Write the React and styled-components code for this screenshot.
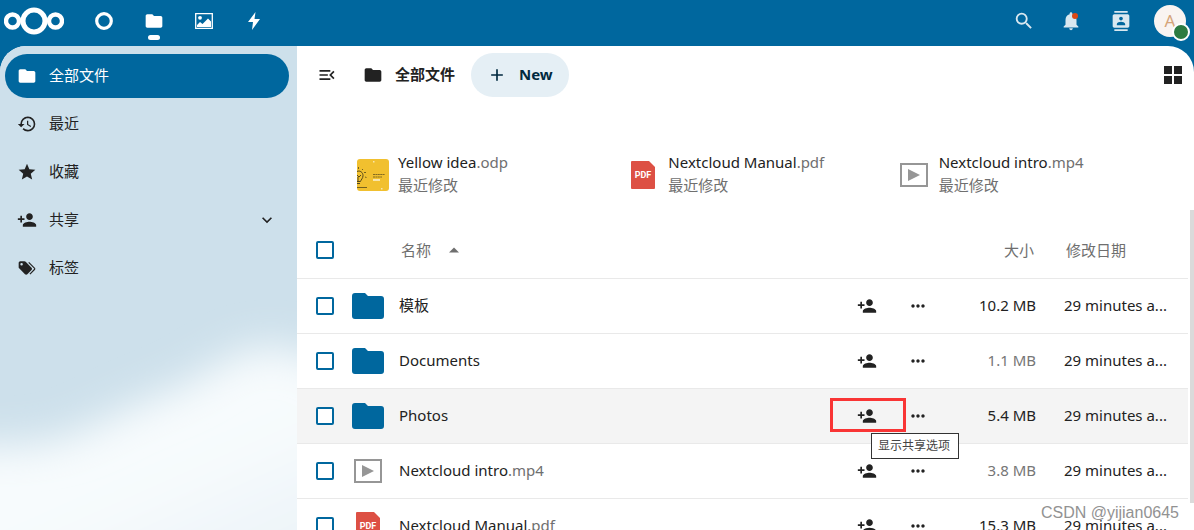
import React from "react";
import styled, { createGlobalStyle, css } from "styled-components";
import {
  MdAdd,
  MdContacts,
  MdExpandMore,
  MdFolder,
  MdHistory,
  MdMenuOpen,
  MdMoreHoriz,
  MdNotifications,
  MdPersonAdd,
  MdSearch,
  MdStar,
} from "react-icons/md";

const GlobalStyle = createGlobalStyle`
  * {
    box-sizing: border-box;
  }
  body {
    margin: 0;
    background: #00679e;
    color: #222;
    font-family: "Noto Sans", "Noto Sans CJK SC", sans-serif;
    font-size: 15px;
    line-height: 22px;
  }
  button, input {
    font: inherit;
    color: inherit;
  }
  svg {
    display: block;
    flex-shrink: 0;
  }
`;

const Page = styled.div`
  display: flex;
  flex-direction: column;
  height: 100vh;
  overflow: hidden;
`;

const Header = styled.header`
  display: flex;
  flex-shrink: 0;
  align-items: center;
  justify-content: space-between;
  height: 46px;
  padding: 0 0 4px 4px;
`;

const HeaderGroup = styled.nav`
  display: flex;
  align-items: center;
`;

const LogoLink = styled.a`
  margin-right: 15px;
`;

const AppLink = styled.a`
  position: relative;
  display: flex;
  align-items: center;
  justify-content: center;
  width: 50px;
  height: 42px;
  color: #fff;
  ${(props) =>
    props.$active &&
    css`
      &::after {
        content: "";
        position: absolute;
        bottom: 2px;
        width: 12px;
        height: 5px;
        border-radius: 3px;
        background: #fff;
      }
    `}
`;

const HeaderButton = styled.button`
  position: relative;
  display: flex;
  align-items: center;
  justify-content: center;
  width: ${(props) => props.$width || 50}px;
  height: 42px;
  padding: 0;
  border: 0;
  background: none;
  color: #d9e8f0;
`;

const UnreadDot = styled.span`
  position: absolute;
  top: 13px;
  right: 18px;
  width: 6px;
  height: 6px;
  border-radius: 50%;
  background: #dd4814;
`;

const Avatar = styled.span`
  width: 32px;
  height: 32px;
  border-radius: 50%;
  background: #f9f4f1;
  color: #d5a47a;
  font-size: 17px;
  line-height: 32px;
`;

const Status = styled.span`
  position: absolute;
  right: 4px;
  bottom: 1px;
  width: 18px;
  height: 18px;
  border: 2px solid #fff;
  border-radius: 50%;
  background: #2d7b41;
`;

const Content = styled.div`
  position: relative;
  display: flex;
  flex: 1;
  min-height: 0;
  overflow: hidden;
  border-radius: 26px 26px 0 0;
  background: #fff;
`;

const Sidebar = styled.aside`
  position: relative;
  flex: 0 0 297px;
  padding: 8px 8px 0 5px;
  background: #cde0eb;
`;

const Clouds = styled.svg`
  position: absolute;
  inset: 0;
  width: 100%;
  height: 100%;
`;

const NavList = styled.ul`
  position: relative;
  display: flex;
  flex-direction: column;
  gap: 4px;
  margin: 0;
  padding: 0;
  list-style: none;
`;

const NavLink = styled.a`
  display: flex;
  align-items: center;
  gap: 12px;
  height: 44px;
  padding: 0 12px;
  border-radius: 22px;
  background: ${(props) => (props.$active ? "#00679e" : "transparent")};
  color: ${(props) => (props.$active ? "#fff" : "#222")};
  text-decoration: none;
`;

const NavLabel = styled.span`
  flex: 1;
  padding-bottom: 2px;
`;

const Main = styled.main`
  flex: 1;
  min-width: 0;
  padding-right: 6px;
`;

const Toolbar = styled.div`
  display: flex;
  align-items: center;
  height: 58px;
  padding: 0 6px 0 8px;
`;

const IconButton = styled.button`
  display: flex;
  align-items: center;
  justify-content: center;
  width: 44px;
  height: 44px;
  padding: 0;
  border: 0;
  background: none;
`;

const Crumb = styled.a`
  display: flex;
  align-items: center;
  gap: 12px;
  padding: 0 16px 0 14px;
  color: #222;
  font-weight: 600;
  text-decoration: none;
`;

const ToolbarLabel = styled.span`
  padding-bottom: 2px;
`;

const NewButton = styled.button`
  display: flex;
  align-items: center;
  gap: 12px;
  height: 44px;
  padding: 0 16px;
  border: 0;
  border-radius: 22px;
  background: #e5eff5;
  color: #00293f;
  font-weight: 700;
`;

const GridToggle = styled(IconButton)`
  width: 18px;
  margin-left: auto;
`;

const Recent = styled.section`
  display: grid;
  grid-template-columns: repeat(3, 1fr);
  padding: 47px 20px 25px 60px;
`;

const RecentItem = styled.a`
  display: flex;
  align-items: center;
  gap: 9px;
  color: #222;
  line-height: 23px;
  text-decoration: none;
  white-space: nowrap;
`;

const RecentText = styled.div`
  padding-bottom: 1px;
`;

const Muted = styled.span`
  color: #6f6f6f;
`;

const Files = styled.table`
  width: 100%;
  border-collapse: collapse;
  table-layout: fixed;
`;

const Col = styled.col`
  width: ${(props) => (props.$width ? `${props.$width}px` : "auto")};
`;

const Row = styled.tr`
  height: 55px;
  background: ${(props) => (props.$hover ? "#f4f4f4" : "transparent")};
  border-bottom: 1px solid #e9e9e9;
`;

const Heading = styled.th`
  padding: ${(props) => props.$pad || "0"};
  color: #6f6f6f;
  font-weight: 400;
  text-align: ${(props) => props.$align || "left"};
`;

const Cell = styled.td`
  padding: ${(props) => props.$pad || "0"};
  color: ${(props) => (props.$muted ? "#767676" : "#222")};
  text-align: ${(props) => props.$align || "left"};
  white-space: nowrap;
`;

const Checkbox = styled.input.attrs({ type: "checkbox" })`
  display: block;
  appearance: none;
  width: 18px;
  height: 18px;
  margin: 0 0 0 19px;
  border: 2px solid #00679e;
  border-radius: 2px;
  background: #fff;
`;

const SortButton = styled.button`
  display: flex;
  align-items: center;
  gap: 18px;
  padding: 0;
  border: 0;
  background: none;
  color: #6f6f6f;
`;

const FileLink = styled.a`
  display: flex;
  align-items: center;
  gap: 15px;
  color: #222;
  text-decoration: none;
`;

const FileName = styled.span`
  padding-bottom: 2px;
`;

const Actions = styled.div`
  position: relative;
  display: flex;
  gap: 7px;
`;

const Highlight = styled.span`
  position: absolute;
  top: 4px;
  left: -15px;
  width: 76px;
  height: 34px;
  border: 3px solid #f93535;
  pointer-events: none;
`;

const Tooltip = styled.span`
  position: absolute;
  z-index: 1;
  top: 39px;
  left: 26px;
  height: 26px;
  padding: 0 8px 0 6px;
  border: 1px solid #333;
  background: #fff;
  color: #444;
  font-size: 12px;
  line-height: 24px;
`;

const ScrollThumb = styled.div`
  position: absolute;
  top: 164px;
  right: 0;
  width: 4px;
  height: 293px;
  background: #dadada;
`;

const Watermark = styled.div`
  position: absolute;
  right: 15px;
  bottom: 6px;
  color: #929292;
  font-family: "Liberation Sans", Arial, sans-serif;
  font-size: 16px;
`;

const Logo = () => (
  <svg width="60" height="28" viewBox="0 0 60 28" fill="none" stroke="#fff">
    <circle cx="30" cy="14" r="11" strokeWidth="5" />
    <circle cx="8.5" cy="14" r="6.5" strokeWidth="4.4" />
    <circle cx="51.5" cy="14" r="6.5" strokeWidth="4.4" />
  </svg>
);

const DashboardIcon = () => (
  <svg width="20" height="20" fill="none" stroke="#fff">
    <circle cx="10" cy="10" r="7.3" strokeWidth="3.2" />
  </svg>
);

const PhotosIcon = () => (
  <svg width="18" height="16" viewBox="0 0 18 16">
    <path d="M.7.7h16.6v14.6H.7z" fill="none" stroke="#fff" strokeWidth="1.3" />
    <circle cx="5" cy="4.8" r="1.9" fill="#fff" />
    <path d="M2 14v-2l3-3 2.5 2L13 5.500l3 3V14z" fill="#fff" />
  </svg>
);

const ActivityIcon = () => (
  <svg width="14" height="20" viewBox="0 0 14 20" fill="#fff">
    <path d="M8.500 1 1 11h5l-1 8L13 8H7.500z" />
  </svg>
);

const TagsIcon = () => (
  <svg width="20" height="20" viewBox="0 0 24 24" fill="currentColor">
    <path d="M5.5,9A1.5,1.5 0 0,0 7,7.5A1.5,1.5 0 0,0 5.5,6A1.5,1.5 0 0,0 4,7.5A1.5,1.5 0 0,0 5.5,9M17.41,11.58C17.77,11.94 18,12.44 18,13C18,13.55 17.78,14.05 17.41,14.41L12.41,19.41C12.05,19.77 11.55,20 11,20C10.45,20 9.95,19.78 9.58,19.41L2.59,12.42C2.22,12.05 2,11.55 2,11V6C2,4.89 2.89,4 4,4H9C9.55,4 10.05,4.22 10.41,4.58L17.41,11.58M13.54,5.71L14.54,4.71L21.41,11.58C21.78,11.94 22,12.45 22,13C22,13.55 21.78,14.05 21.42,14.41L16.04,19.79L15.04,18.79L20.75,13L13.54,5.71Z" />
  </svg>
);

const GridIcon = () => (
  <svg width="18" height="18" fill="#222">
    <path d="M0 0h8v8H0zM10 0h8v8h-8zM0 10h8v8H0zM10 10h8v8h-8z" />
  </svg>
);

const SortIcon = () => (
  <svg width="10" height="6" fill="currentColor">
    <path d="M0 5.500 5 .5l5 5z" />
  </svg>
);

const FolderIcon = () => (
  <svg width="32" height="32" viewBox="0 0 32 32" fill="#00679e">
    <path d="M3 3h10l3 3h13a3 3 0 0 1 3 3v17a3 3 0 0 1-3 3H3a3 3 0 0 1-3-3V6a3 3 0 0 1 3-3z" />
  </svg>
);

const VideoIcon = () => (
  <svg width="32" height="32" viewBox="0 0 32 32">
    <path d="M3 5h26v22H3z" fill="none" stroke="#969696" strokeWidth="2" />
    <path d="M10 10v12l12-6z" fill="#969696" />
  </svg>
);

const PdfIcon = () => (
  <svg width="32" height="32" viewBox="0 0 32 32">
    <path d="M5 2h17l6 6v21a1 1 0 0 1-1 1H5a1 1 0 0 1-1-1V3a1 1 0 0 1 1-1z" fill="#dd5044" />
    <text x="16" y="19" fill="#fff" fontFamily="Roboto, sans-serif" fontSize="9" fontWeight="700" textAnchor="middle">
      PDF
    </text>
  </svg>
);

const IdeaThumb = () => (
  <svg width="32" height="32" viewBox="0 0 32 32">
    <rect width="32" height="32" rx="3" fill="#f1c02f" />
    <g fill="none" stroke="#54471b">
      <path d="M0 12.500c3-1.500 6 1 6 4s-2 4-2.500 6H0M0 16l2 2 2-2M1 18v4M0 24.500h3" />
      <path d="M1.500 8v2M6 10l-1 1M7 13.500h2M8 18l1.500.500M0 28.500h10" strokeWidth=".8" />
      <path d="M16 15.500h12M16 18h9" strokeWidth="1.200" strokeDasharray="2 .4" opacity=".7" />
    </g>
    <path d="M16 20h7v2h-7zM16 2h1.500v1.500H16zM24 29h1.500v1.500H24z" fill="#f8e6ac" />
  </svg>
);

const icons = { folder: <FolderIcon />, video: <VideoIcon />, pdf: <PdfIcon />, idea: <IdeaThumb /> };

const navItems = [
  { label: "全部文件", icon: <MdFolder size="20" />, active: true },
  { label: "最近", icon: <MdHistory size="20" /> },
  { label: "收藏", icon: <MdStar size="20" /> },
  { label: "共享", icon: <MdPersonAdd size="20" />, open: true },
  { label: "标签", icon: <TagsIcon /> },
];

const recentFiles = [
  { name: "Yellow idea", ext: ".odp", icon: "idea" },
  { name: "Nextcloud Manual", ext: ".pdf", icon: "pdf" },
  { name: "Nextcloud intro", ext: ".mp4", icon: "video" },
];

const files = [
  { name: "模板", icon: "folder", size: "10.2 MB" },
  { name: "Documents", icon: "folder", size: "1.1 MB", small: true },
  { name: "Photos", icon: "folder", size: "5.4 MB", hover: true },
  { name: "Nextcloud intro", ext: ".mp4", icon: "video", size: "3.8 MB", small: true },
  { name: "Nextcloud Manual", ext: ".pdf", icon: "pdf", size: "15.3 MB" },
];

function FileRow({ name, ext, icon, size, small, hover }) {
  return (
    <Row $hover={hover}>
      <Cell>
        <Checkbox aria-label={name} />
      </Cell>
      <Cell>
        <FileLink href="#">
          {icons[icon]}
          <FileName>
            {name}
            <Muted>{ext}</Muted>
          </FileName>
        </FileLink>
      </Cell>
      <Cell>
        <Actions>
          <IconButton aria-label="共享">
            <MdPersonAdd size="20" />
          </IconButton>
          <IconButton aria-label="操作">
            <MdMoreHoriz size="20" />
          </IconButton>
          {hover && <Highlight />}
          {hover && <Tooltip role="tooltip">显示共享选项</Tooltip>}
        </Actions>
      </Cell>
      <Cell $pad="0 0 2px" $align="right" $muted={small}>{size}</Cell>
      <Cell $pad="0 0 2px 28px">29 minutes a...</Cell>
    </Row>
  );
}

function App() {
  return (
    <Page>
      <GlobalStyle />
      <Header>
        <HeaderGroup>
          <LogoLink href="#" aria-label="Nextcloud"><Logo /></LogoLink>
          <AppLink href="#" aria-label="仪表盘"><DashboardIcon /></AppLink>
          <AppLink href="#" aria-label="文件" $active><MdFolder size="20" /></AppLink>
          <AppLink href="#" aria-label="照片"><PhotosIcon /></AppLink>
          <AppLink href="#" aria-label="动态"><ActivityIcon /></AppLink>
        </HeaderGroup>
        <HeaderGroup>
          <HeaderButton aria-label="搜索" $width={44}><MdSearch size="22" /></HeaderButton>
          <HeaderButton aria-label="通知">
            <MdNotifications size="22" />
            <UnreadDot />
          </HeaderButton>
          <HeaderButton aria-label="联系人"><MdContacts size="20" /></HeaderButton>
          <HeaderButton aria-label="账户" $width={48}>
            <Avatar>A</Avatar>
            <Status />
          </HeaderButton>
        </HeaderGroup>
      </Header>
      <Content>
        <Sidebar>
          <Clouds viewBox="0 0 297 484" preserveAspectRatio="none" aria-hidden="true">
            <defs>
              <filter id="soft" x="-50%" y="-50%" width="200%" height="200%">
                <feGaussianBlur stdDeviation="20" />
              </filter>
              <linearGradient id="cloud" gradientUnits="userSpaceOnUse" x1="120" y1="360" x2="200" y2="540">
                <stop offset=".4" stopColor="#f7fbfd" />
                <stop offset="1" stopColor="#edf4f8" />
              </linearGradient>
            </defs>
            <path
              d="M-100 399H20C75 397 110 367 160 349S230 301 270 301S330 325 400 350V600H-100z"
              fill="url(#cloud)"
              filter="url(#soft)"
            />
          </Clouds>
          <NavList>
            {navItems.map((item) => (
              <li key={item.label}>
                <NavLink href="#" $active={item.active}>
                  {item.icon}
                  <NavLabel>{item.label}</NavLabel>
                  {item.open && <MdExpandMore size="20" />}
                </NavLink>
              </li>
            ))}
          </NavList>
        </Sidebar>
        <Main>
          <Toolbar>
            <IconButton aria-label="收起导航"><MdMenuOpen size="20" /></IconButton>
            <Crumb href="#">
              <MdFolder size="20" />
              <ToolbarLabel>全部文件</ToolbarLabel>
            </Crumb>
            <NewButton>
              <MdAdd size="20" />
              <ToolbarLabel>New</ToolbarLabel>
            </NewButton>
            <GridToggle aria-label="切换网格视图"><GridIcon /></GridToggle>
          </Toolbar>
          <Recent>
            {recentFiles.map((file) => (
              <RecentItem href="#" key={file.name}>
                {icons[file.icon]}
                <RecentText>
                  <div>
                    {file.name}
                    <Muted>{file.ext}</Muted>
                  </div>
                  <Muted>最近修改</Muted>
                </RecentText>
              </RecentItem>
            ))}
          </Recent>
          <Files>
            <colgroup>
              <Col $width={55} />
              <Col />
              <Col $width={95} />
              <Col $width={96} />
              <Col $width={152} />
            </colgroup>
            <thead>
              <Row>
                <Heading><Checkbox aria-label="全选" /></Heading>
                <Heading $pad="0 0 0 49px">
                  <SortButton>
                    名称
                    <SortIcon />
                  </SortButton>
                </Heading>
                <Heading />
                <Heading $pad="0 2px 0 0" $align="right">大小</Heading>
                <Heading $pad="0 0 0 30px">修改日期</Heading>
              </Row>
            </thead>
            <tbody>
              {files.map((file) => (
                <FileRow key={file.name} {...file} />
              ))}
            </tbody>
          </Files>
        </Main>
        <ScrollThumb />
        <Watermark>CSDN @yijian0645</Watermark>
      </Content>
    </Page>
  );
}

export default App;
